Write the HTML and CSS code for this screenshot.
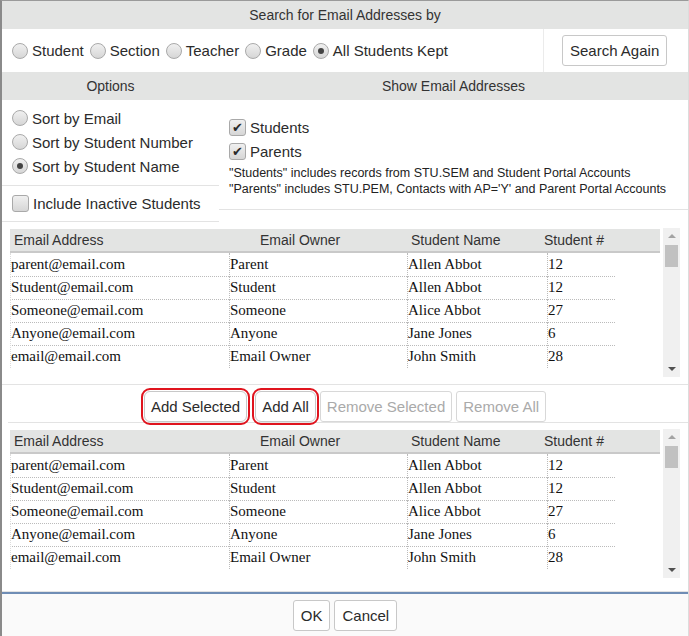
FILE: index.html
```html
<!DOCTYPE html>
<html lang="en">
<head>
    <meta charset="UTF-8">
    <meta name="viewport" content="width=device-width, initial-scale=1.0">
    <title>Search for Email Addresses</title>
    <link rel="stylesheet" href="styles.css">
</head>
<body>
    <div class="dialog">
        <div class="bar">Search for Email Addresses by</div>
        <div class="search-row">
            <div class="search-options">
                <label class="choice"><span class="radio"></span>Student</label>
                <label class="choice"><span class="radio"></span>Section</label>
                <label class="choice"><span class="radio"></span>Teacher</label>
                <label class="choice"><span class="radio"></span>Grade</label>
                <label class="choice"><span class="radio checked"></span>All Students Kept</label>
            </div>
            <div class="search-action">
                <button class="button">Search Again</button>
            </div>
        </div>

        <div class="bar split">
            <div class="bar-left">Options</div>
            <div class="bar-right">Show Email Addresses</div>
        </div>

        <div class="options">
            <div class="options-left">
                <div class="sort-list">
                    <label class="choice"><span class="radio"></span>Sort by Email</label>
                    <label class="choice"><span class="radio"></span>Sort by Student Number</label>
                    <label class="choice"><span class="radio checked"></span>Sort by Student Name</label>
                </div>
                <div class="inactive">
                    <label class="choice"><span class="checkbox"></span>Include Inactive Students</label>
                </div>
            </div>
            <div class="options-right">
                <label class="choice"><span class="checkbox checked">&#10004;</span>Students</label>
                <label class="choice"><span class="checkbox checked">&#10004;</span>Parents</label>
                <p class="note">"Students" includes records from STU.SEM and Student Portal Accounts<br>"Parents" includes STU.PEM, Contacts with AP='Y' and Parent Portal Accounts</p>
            </div>
        </div>

        <div class="grid-area">
            <div class="grid">
                <div class="grid-head">
                    <div class="head-email">Email Address</div>
                    <div class="head-owner">Email Owner</div>
                    <div class="head-name">Student Name</div>
                    <div class="head-num">Student #</div>
                </div>
                <div class="grid-row"><div>parent@email.com</div><div>Parent</div><div>Allen Abbot</div><div>12</div></div>
                <div class="grid-row"><div>Student@email.com</div><div>Student</div><div>Allen Abbot</div><div>12</div></div>
                <div class="grid-row"><div>Someone@email.com</div><div>Someone</div><div>Alice Abbot</div><div>27</div></div>
                <div class="grid-row"><div>Anyone@email.com</div><div>Anyone</div><div>Jane Jones</div><div>6</div></div>
                <div class="grid-row last"><div>email@email.com</div><div>Email Owner</div><div>John Smith</div><div>28</div></div>
            </div>
            <div class="scrollbar">
                <span class="arrow up"></span>
                <span class="thumb"></span>
                <span class="arrow down"></span>
            </div>
        </div>

        <div class="actions">
            <button class="button marked">Add Selected</button>
            <button class="button marked">Add All</button>
            <button class="button" disabled>Remove Selected</button>
            <button class="button" disabled>Remove All</button>
        </div>

        <div class="grid-area second">
            <div class="grid">
                <div class="grid-head">
                    <div class="head-email">Email Address</div>
                    <div class="head-owner">Email Owner</div>
                    <div class="head-name">Student Name</div>
                    <div class="head-num">Student #</div>
                </div>
                <div class="grid-row"><div>parent@email.com</div><div>Parent</div><div>Allen Abbot</div><div>12</div></div>
                <div class="grid-row"><div>Student@email.com</div><div>Student</div><div>Allen Abbot</div><div>12</div></div>
                <div class="grid-row"><div>Someone@email.com</div><div>Someone</div><div>Alice Abbot</div><div>27</div></div>
                <div class="grid-row"><div>Anyone@email.com</div><div>Anyone</div><div>Jane Jones</div><div>6</div></div>
                <div class="grid-row last"><div>email@email.com</div><div>Email Owner</div><div>John Smith</div><div>28</div></div>
            </div>
            <div class="scrollbar">
                <span class="arrow up"></span>
                <span class="thumb"></span>
                <span class="arrow down"></span>
            </div>
        </div>

        <div class="footer">
            <button class="button">OK</button>
            <button class="button">Cancel</button>
        </div>
    </div>
</body>
</html>
```

FILE: styles.css
```css
body {
    margin: 0;
    font-family: "Liberation Sans", Arial, sans-serif;
    color: #2b2b2b;
    background-color: #fff;
}
.dialog {
    width: 689px;
    height: 636px;
    box-sizing: border-box;
    border-top: 1px solid #9a9a9a;
    border-left: 2px solid #8a8a8a;
    border-right: 1px solid #dcdcdc;
    background-color: #fff;
    overflow: hidden;
}
.bar {
    height: 28px;
    line-height: 28px;
    background-color: #e3e4e3;
    text-align: center;
    font-size: 14px;
    color: #333;
}
.bar.split {
    display: flex;
    text-align: center;
}
.bar-left {
    width: 217px;
}
.bar-right {
    flex: 1;
}
.search-row {
    display: flex;
    height: 43px;
}
.search-options {
    flex: 1;
    display: flex;
    align-items: center;
    padding-left: 10px;
    gap: 6px;
}
.search-action {
    width: 145px;
    border-left: 1px solid #ebebeb;
    display: flex;
    align-items: center;
    padding-left: 18px;
    box-sizing: border-box;
}
.choice {
    display: flex;
    align-items: center;
    font-size: 15px;
    color: #2b2b2b;
    white-space: nowrap;
}
.radio {
    width: 14px;
    height: 14px;
    border-radius: 50%;
    border: 1px solid #a9a9a9;
    background: linear-gradient(#f0f0f0, #d6d6d6);
    margin-right: 4px;
    position: relative;
    flex-shrink: 0;
}
.radio.checked::after {
    content: "";
    position: absolute;
    left: 4px;
    top: 4px;
    width: 6px;
    height: 6px;
    border-radius: 50%;
    background-color: #444;
}
.checkbox {
    width: 15px;
    height: 15px;
    border: 1px solid #a9a9a9;
    border-radius: 3px;
    background: linear-gradient(#f0f0f0, #d6d6d6);
    margin-right: 4px;
    flex-shrink: 0;
    font-size: 13px;
    line-height: 15px;
    text-align: center;
    color: #2a2a2a;
}
.button {
    font-family: "Liberation Sans", Arial, sans-serif;
    font-size: 15px;
    color: #2b2b2b;
    background-color: #fff;
    border: 1px solid #c8c8c8;
    border-radius: 3px;
    height: 31px;
    padding: 0 7px;
    cursor: pointer;
}
.button:disabled {
    color: #aaa;
    border-color: #d8d8d8;
    cursor: default;
}
.button.marked {
    outline: 2px solid #e0141e;
    outline-offset: 1px;
    border-radius: 6px;
}
.button.marked:first-child {
    margin-right: 4px;
}
.actions .button {
    padding: 0 6px;
}
.options {
    display: flex;
    height: 122px;
}
.options-left {
    width: 217px;
    flex-shrink: 0;
}
.sort-list {
    display: flex;
    flex-direction: column;
    gap: 6px;
    padding: 9px 0 10px 10px;
    border-bottom: 1px solid #e3e3e3;
}
.sort-list .choice {
    height: 18px;
}
.inactive {
    height: 35px;
    display: flex;
    align-items: center;
    padding-left: 10px;
    border-bottom: 1px solid #e3e3e3;
}
.options-right {
    flex: 1;
    padding: 15px 0 0 10px;
    height: 110px;
    box-sizing: border-box;
    border-bottom: 1px solid #e3e3e3;
}
.options-right .choice {
    height: 24px;
}
.note {
    margin: 2px 0 0;
    font-size: 12.5px;
    line-height: 16px;
    color: #222;
}
.grid-area {
    display: flex;
    padding: 6px 8px 7px 8px;
    border-bottom: 1px solid #e3e3e3;
}
.grid {
    width: 650px;
    height: 149px;
    padding-top: 1px;
    box-sizing: border-box;
}
.grid-head {
    display: flex;
    height: 22px;
    line-height: 22px;
    background-color: #e3e4e3;
    border-bottom: 2px solid #c9c9c9;
    font-size: 14px;
    color: #333;
}
.head-email {
    width: 246px;
    padding-left: 4px;
    box-sizing: border-box;
}
.head-owner {
    width: 151px;
    padding-left: 4px;
    box-sizing: border-box;
}
.head-name {
    width: 137px;
    padding-left: 4px;
    box-sizing: border-box;
}
.head-num {
    flex: 1;
}
.grid-row {
    display: grid;
    grid-template-columns: 219px 178px 140px 68px;
    height: 23px;
    font-family: "Liberation Serif", "Times New Roman", serif;
    font-size: 15px;
    color: #111;
}
.grid-row div {
    line-height: 23px;
    border-left: 1px dotted #bbb;
    border-bottom: 1px dotted #bbb;
    white-space: nowrap;
}
.grid-row div:first-child {
    border-left: 1px dotted #ddd;
}
.grid-row.last div {
    border-bottom: none;
}
.scrollbar {
    width: 17px;
    height: 149px;
    margin-left: 3px;
    background-color: #f0f0f0;
    position: relative;
}
.thumb {
    position: absolute;
    left: 2px;
    top: 17px;
    width: 13px;
    height: 22px;
    background-color: #c1c1c1;
}
.arrow {
    position: absolute;
    left: 5px;
    width: 0;
    height: 0;
    border-left: 4px solid transparent;
    border-right: 4px solid transparent;
}
.arrow.up {
    top: 6px;
    border-bottom: 4px solid #a3a3a3;
}
.arrow.down {
    bottom: 6px;
    border-top: 4px solid #505050;
}
.actions {
    display: flex;
    justify-content: center;
    gap: 4px;
    padding: 6px 6px 0 0;
    margin-left: 6px;
    border-bottom: 1px solid #e3e3e3;
}
.grid-area.second {
    padding-top: 6px;
    padding-bottom: 13px;
    border-bottom: 1px solid #e3e3e3;
}
.footer {
    border-top: 2px solid #6f8db5;
    background-color: #fafafa;
    display: flex;
    justify-content: center;
    gap: 4px;
    padding-top: 6px;
    height: 44px;
}
```
